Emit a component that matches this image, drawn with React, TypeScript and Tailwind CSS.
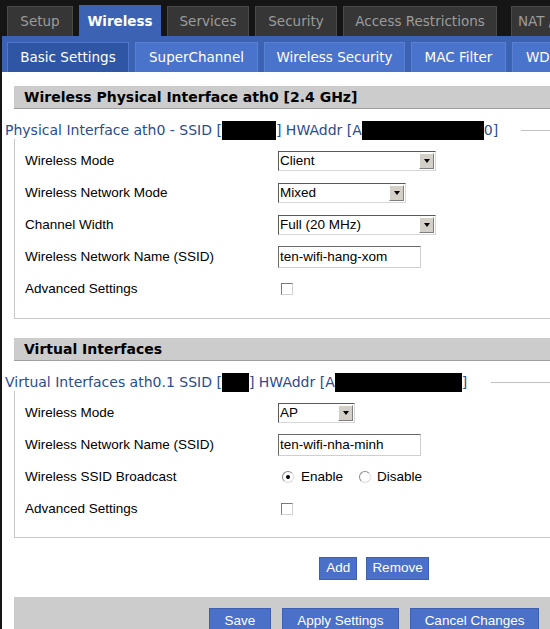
import React from "react";

const verdana = { fontFamily: '"DejaVu Sans", Verdana, sans-serif' };
const tahoma = { fontFamily: '"Liberation Sans", Tahoma, Arial, sans-serif' };

function Select({ value, width }: { value: string; width: number }) {
  return (
    <div
      className="h-[20px] bg-white border border-t-[#5a5a5a] border-l-[#5a5a5a] border-b-[#d8d8d8] border-r-[#d8d8d8] flex items-stretch"
      style={{ width }}
    >
      <div className="flex-1 flex items-center pl-[1px] text-[13.5px] text-black leading-none" style={tahoma}>
        {value}
      </div>
      <div className="w-[15px] my-[1px] mr-[1px] bg-[#d4d0c8] border border-t-white border-l-white border-b-[#808080] border-r-[#808080] flex items-center justify-center">
        <div className="w-0 h-0 border-l-[3.5px] border-r-[3.5px] border-t-[4px] border-l-transparent border-r-transparent border-t-black" />
      </div>
    </div>
  );
}

function TextInput({ value }: { value: string }) {
  return (
    <div
      className="w-[143px] h-[22px] bg-white border border-t-[#6a6a6a] border-l-[#6a6a6a] border-b-[#cfcfcf] border-r-[#cfcfcf] flex items-center pl-[1px] text-[13.5px] text-black"
      style={tahoma}
    >
      {value}
    </div>
  );
}

function Checkbox() {
  return (
    <div className="ml-[3px] w-[12px] h-[12px] bg-white border border-t-[#7a7a7a] border-l-[#7a7a7a] border-b-[#d0d0d0] border-r-[#d0d0d0]" />
  );
}

function Radio({ checked }: { checked?: boolean }) {
  return (
    <div className="w-[12px] h-[12px] rounded-full bg-white border border-t-[#8a8a8a] border-l-[#8a8a8a] border-b-[#dcdcdc] border-r-[#dcdcdc] flex items-center justify-center">
      {checked && <div className="w-[4px] h-[4px] rounded-full bg-black" />}
    </div>
  );
}

function Row({ label, children }: { label: string; children: React.ReactNode }) {
  return (
    <div className="h-[32px] flex items-center">
      <div className="w-[253px] text-[13.5px] text-black" style={tahoma}>
        {label}
      </div>
      <div className="flex items-center">{children}</div>
    </div>
  );
}

function SectionHeader({ title }: { title: string }) {
  return (
    <div
      className="h-[23px] w-[720px] bg-[#cccccc] border-b border-[#a0a0a0] flex items-center pl-[10px] text-[14px] font-bold text-black"
      style={verdana}
    >
      {title}
    </div>
  );
}

function Redact({ w }: { w: number }) {
  return <span className="inline-block bg-black h-[19px] align-middle shrink-0" style={{ width: w }} />;
}

function Legend({ children, gap }: { children: React.ReactNode; gap: number }) {
  return (
    <div className="-ml-[9px] mt-[12px] h-[18px] flex items-center w-[729px]">
      <div className="whitespace-nowrap text-[14px] text-[#2a4c91] flex items-center" style={verdana}>
        {children}
      </div>
      <div className="flex-1 h-px bg-[#c0c0c0]" style={{ marginLeft: gap }} />
    </div>
  );
}

function Tab({ label, w, active, left }: { label: string; w: number; active?: boolean; left?: number }) {
  if (active) {
    return (
      <div
        className="h-[32px] -mb-px bg-[#3c62b3] flex items-center justify-center text-[13.5px] font-bold text-white shrink-0"
        style={{ width: w, ...verdana }}
      >
        {label}
      </div>
    );
  }
  return (
    <div
      className={
        "h-[30px] bg-[#363636] border border-[#4a4a4a] border-b-0 flex items-center text-[13.5px] text-[#9c9c9c] shrink-0 whitespace-nowrap " +
        (left !== undefined ? "justify-start" : "justify-center")
      }
      style={{ width: w, paddingLeft: left, ...verdana }}
    >
      {label}
    </div>
  );
}

function SubTab({ label, w, active, left }: { label: string; w: number; active?: boolean; left?: number }) {
  return (
    <div
      className={
        "h-[30px] flex items-center text-[13.5px] text-white shrink-0 border border-b-0 whitespace-nowrap " +
        (active ? "bg-[#2f56a5] border-[#4f78cc] " : "bg-[#4a73cb] border-[#5a80d2] ") +
        (left !== undefined ? "justify-start" : "justify-center")
      }
      style={{ width: w, paddingLeft: left, ...verdana }}
    >
      {label}
    </div>
  );
}

function BlueButton({ label, h, px }: { label: string; h: number; px: number }) {
  return (
    <div
      className="bg-[#4a70c8] border border-[#3d60b4] flex items-center text-white text-[13.5px] whitespace-nowrap"
      style={{ height: h, paddingLeft: px, paddingRight: px, ...tahoma }}
    >
      {label}
    </div>
  );
}

export default function App() {
  return (
    <div className="w-[550px] h-[629px] overflow-hidden bg-[#151515]">
      <div className="w-[760px]">
        {/* top tabs */}
        <div className="h-[36px] flex items-end gap-[6px] pl-[7px]">
          <Tab label="Setup" w={66} />
          <Tab label="Wireless" w={82} active />
          <Tab label="Services" w={82} />
          <Tab label="Security" w={82} />
          <Tab label="Access Restrictions" w={154} />
          <div className="w-[2px]" />
          <Tab label="NAT / QoS" w={100} left={6} />
        </div>
        {/* sub tabs */}
        <div className="ml-[2px] h-[36px] bg-[#3c62b3] flex items-end gap-[6px] pl-[5px]">
          <SubTab label="Basic Settings" w={122} active />
          <SubTab label="SuperChannel" w={123} />
          <SubTab label="Wireless Security" w={141} />
          <SubTab label="MAC Filter" w={95} />
          <SubTab label="WDS" w={80} left={13} />
        </div>
        {/* content */}
        <div className="ml-[2px] bg-white pl-[12px] pt-[14px] h-[600px]">
          <div className="w-[720px]">
            <SectionHeader title="Wireless Physical Interface ath0 [2.4 GHz]" />
            <Legend gap={23}>
              <span>Physical Interface ath0 - SSID [</span>
              <Redact w={54} />
              <span>] HWAddr [A</span>
              <Redact w={122} />
              <span>0]</span>
            </Legend>
            <div className="border-l border-b border-[#c8c8c8] pl-[10px] pt-[6px] pb-[13px]">
              <Row label="Wireless Mode">
                <Select value="Client" width={158} />
              </Row>
              <Row label="Wireless Network Mode">
                <Select value="Mixed" width={128} />
              </Row>
              <Row label="Channel Width">
                <Select value="Full (20 MHz)" width={158} />
              </Row>
              <Row label="Wireless Network Name (SSID)">
                <TextInput value="ten-wifi-hang-xom" />
              </Row>
              <Row label="Advanced Settings">
                <Checkbox />
              </Row>
            </div>

            <div className="mt-[19px]">
              <SectionHeader title="Virtual Interfaces" />
            </div>
            <Legend gap={24}>
              <span>Virtual Interfaces ath0.1 SSID [</span>
              <Redact w={27} />
              <span>] HWAddr [A</span>
              <Redact w={127} />
              <span>]</span>
            </Legend>
            <div className="border-l border-b border-[#c8c8c8] pl-[10px] pt-[6px] pb-[12px]">
              <Row label="Wireless Mode">
                <Select value="AP" width={77} />
              </Row>
              <Row label="Wireless Network Name (SSID)">
                <TextInput value="ten-wifi-nha-minh" />
              </Row>
              <Row label="Wireless SSID Broadcast">
                <div className="flex items-center text-[13.5px] text-black" style={tahoma}>
                  <div className="ml-[4px]">
                    <Radio checked />
                  </div>
                  <span className="ml-[7px]">Enable</span>
                  <div className="ml-[16px]">
                    <Radio />
                  </div>
                  <span className="ml-[6px]">Disable</span>
                </div>
              </Row>
              <Row label="Advanced Settings">
                <Checkbox />
              </Row>
            </div>

            <div className="mt-[19px] flex justify-center gap-[9px]">
              <BlueButton label="Add" h={23} px={6} />
              <BlueButton label="Remove" h={23} px={5} />
            </div>

            <div className="mt-[17px] bg-[#cccccc] pt-[11px] h-[60px] flex justify-center items-start gap-[11px]">
              <BlueButton label="Save" h={27} px={15} />
              <BlueButton label="Apply Settings" h={27} px={14} />
              <BlueButton label="Cancel Changes" h={27} px={14} />
            </div>
          </div>
        </div>
      </div>
    </div>
  );
}
